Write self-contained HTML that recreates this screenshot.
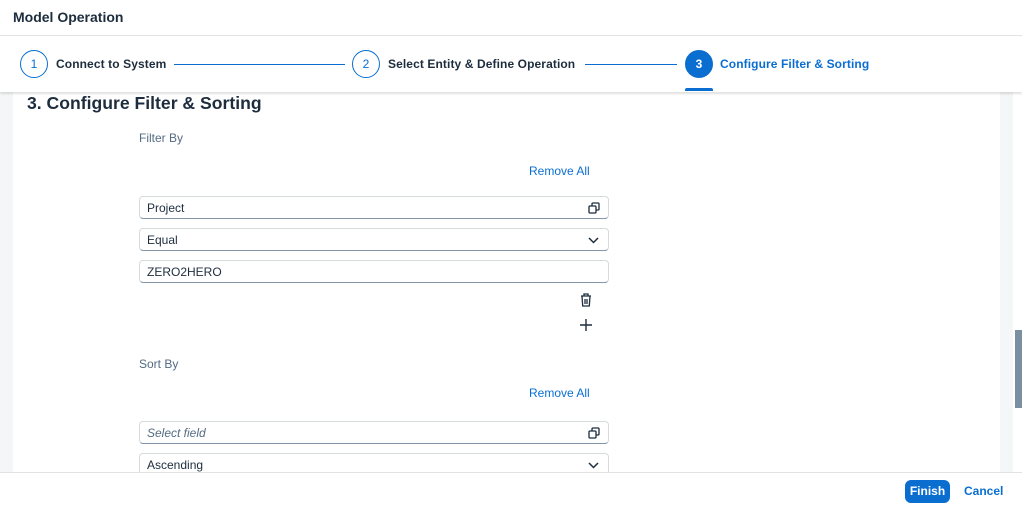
<!DOCTYPE html>
<html><head><style>
*{box-sizing:border-box;margin:0;padding:0}
body{width:1022px;height:511px;overflow:hidden;font-family:"Liberation Sans",sans-serif;background:#fff;position:relative;color:#1d2d3e}
.abs{position:absolute}
.hdr{left:0;top:0;width:1022px;height:36px;border-bottom:1px solid #e0e3e6;}
.hdr span{position:absolute;left:13px;top:9px;font-size:14px;font-weight:bold;color:#1d2d3e}
.step{top:37px;left:0;width:1022px;height:55px;background:#fff;box-shadow:0 2px 2px rgba(0,0,0,.12);z-index:2}
.circ{position:absolute;width:28px;height:28px;border-radius:50%;border:1px solid #0a6ed1;color:#0a6ed1;font-size:12px;text-align:center;line-height:26px;top:13px}
.lbl{position:absolute;top:20px;font-size:12px;font-weight:bold;color:#1d2d3e;letter-spacing:.1px}
.line{position:absolute;top:27px;height:1px;background:#0a6ed1}
.gray{left:0;top:92px;width:1022px;height:380px;background:#f5f6f7}
.panel{left:13px;top:92px;width:987px;height:380px;background:#fff}
.sb{left:1013px;top:92px;width:9px;height:380px;background:#fff}
.inp{position:absolute;left:139px;width:470px;height:23px;border:1px solid #d5dadd;border-bottom:1px solid #8396a8;border-radius:4px;background:#fff;font-size:12px;padding:4px 0 0 7px;color:#1d2d3e}
.link{position:absolute;left:529px;font-size:12px;color:#0a6ed1}
.small{position:absolute;left:139px;font-size:12px;color:#556b82}
.foot{left:0;top:472px;width:1022px;height:39px;border-top:1px solid #e0e3e6;background:#fff}
</style></head><body>
<div class="abs hdr"><span>Model Operation</span></div>
<div class="abs step">
 <div class="circ" style="left:20px">1</div>
 <div class="lbl" style="left:56px">Connect to System</div>
 <div class="line" style="left:174px;width:171px"></div>
 <div class="circ" style="left:352px">2</div>
 <div class="lbl" style="left:388px">Select Entity &amp; Define Operation</div>
 <div class="line" style="left:585px;width:92px"></div>
 <div class="circ" style="left:685px;background:#0a6ed1;color:#fff;font-weight:bold">3</div>
 <div class="lbl" style="left:720px;color:#0a6ed1">Configure Filter &amp; Sorting</div>
 <div style="position:absolute;left:685px;top:51px;width:28px;height:3px;background:#0a6ed1;border-radius:2px 2px 0 0"></div>
</div>
<div class="abs gray"></div>
<div class="abs panel"></div>
<div class="abs sb"><div style="position:absolute;left:2px;top:238px;width:7px;height:78px;background:#7b8fa3"></div></div>
<div class="abs" style="left:27px;top:93px;font-size:17.6px;font-weight:bold;color:#1d2d3e">3. Configure Filter &amp; Sorting</div>
<div class="small" style="top:131px">Filter By</div>
<div class="link" style="top:164px">Remove All</div>
<div class="inp" style="top:196px">Project<svg style="position:absolute;right:8px;top:5px" width="12" height="12" viewBox="0 0 12 12" fill="none" stroke="#1d2d3e" stroke-width="1.3"><rect x="1" y="4" width="7" height="7" rx="1"/><path d="M4 4V2a1 1 0 0 1 1-1h5a1 1 0 0 1 1 1v5a1 1 0 0 1-1 1H8"/></svg></div>
<div class="inp" style="top:228px">Equal<svg style="position:absolute;right:9px;top:8px" width="11" height="7" viewBox="0 0 11 7" fill="none" stroke="#1d2d3e" stroke-width="1.5"><path d="M1 1l4.5 4.5L10 1"/></svg></div>
<div class="inp" style="top:260px">ZERO2HERO</div>
<svg class="abs" style="left:580px;top:293px" width="12" height="14" viewBox="0 0 12 14" fill="none" stroke="#1d2d3e" stroke-width="1.3"><path d="M1 3h10M4 3V1h4v2M2 3l.7 10h6.6L10 3M5 6v5M7 6v5"/></svg>
<svg class="abs" style="left:579px;top:318px" width="14" height="14" viewBox="0 0 14 14" stroke="#1d2d3e" stroke-width="1.4"><path d="M7 1v12M1 7h12"/></svg>
<div class="small" style="top:357px">Sort By</div>
<div class="link" style="top:386px">Remove All</div>
<div class="inp" style="top:421px;font-style:italic;color:#556b82">Select field<svg style="position:absolute;right:8px;top:5px" width="12" height="12" viewBox="0 0 12 12" fill="none" stroke="#1d2d3e" stroke-width="1.3"><rect x="1" y="4" width="7" height="7" rx="1"/><path d="M4 4V2a1 1 0 0 1 1-1h5a1 1 0 0 1 1 1v5a1 1 0 0 1-1 1H8"/></svg></div>
<div class="inp" style="top:453px;height:30px">Ascending<svg style="position:absolute;right:9px;top:8px" width="11" height="7" viewBox="0 0 11 7" fill="none" stroke="#1d2d3e" stroke-width="1.5"><path d="M1 1l4.5 4.5L10 1"/></svg></div>
<div class="abs foot">
 <div style="position:absolute;left:905px;top:7px;width:45px;height:23px;background:#0a6ed1;border-radius:6px;color:#fff;font-size:12px;font-weight:bold;text-align:center;line-height:23px">Finish</div>
 <div style="position:absolute;left:964px;top:11px;font-size:12px;font-weight:bold;color:#0a6ed1">Cancel</div>
</div>
</body></html>
